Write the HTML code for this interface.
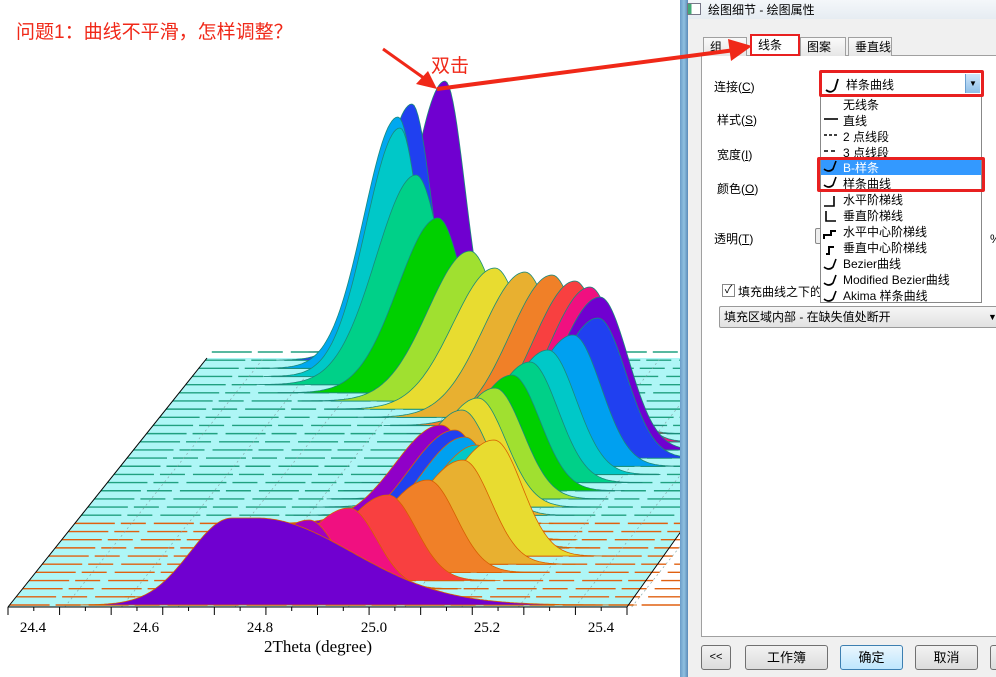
<!DOCTYPE html>
<html><head><meta charset="utf-8">
<style>
*{margin:0;padding:0;box-sizing:border-box}
body{width:996px;height:677px;overflow:hidden;background:#fff;position:relative;font-family:"Liberation Sans","Noto Sans CJK SC",sans-serif;font-size:12px;color:#000}
.abs{position:absolute}
.red{color:#f02818}
#dlg{position:absolute;left:680px;top:0;width:316px;height:677px;background:#f0f0f0}
.lbl{position:absolute;font-size:12px}
.item{position:absolute;left:22px;height:16px;line-height:16px;font-size:12px;white-space:nowrap}
.btn{position:absolute;top:645px;height:25px;border:1px solid #707070;border-radius:3px;background:linear-gradient(#f2f2f2,#dcdcdc);text-align:center;line-height:23px;font-size:13px}
.tab{position:absolute;top:37px;height:19px;border:1px solid #a0a0a0;border-bottom:none;background:linear-gradient(#fafafa,#e6e6e6);font-size:12px;line-height:18px;padding-left:6px}
</style></head><body>
<svg id="chart" class="abs" style="left:0;top:0" width="680" height="677">
<defs><clipPath id="cp"><rect x="0" y="0" width="680" height="677"/></clipPath></defs>
<g clip-path="url(#cp)" id="cg">
<polygon points="8,607 627,607 682,530 682,358 207,358" fill="#aef6f6"/>
<g id="stripes"></g>
<g id="grid" stroke="#8aa" stroke-width="0.7" stroke-dasharray="2,3"></g>
<g id="curves"></g>
<line x1="207" y1="358" x2="8" y2="607" stroke="#000" stroke-width="1"/>
<line x1="627" y1="607" x2="682" y2="530" stroke="#000" stroke-width="1"/>
</g>
<line x1="8" y1="607" x2="627" y2="607" stroke="#000" stroke-width="1"/>
<g id="ticks" stroke="#000" stroke-width="1"></g>
<g font-family="Liberation Serif, serif" font-size="15" text-anchor="middle">
<text x="33" y="632">24.4</text><text x="146" y="632">24.6</text><text x="260" y="632">24.8</text><text x="374" y="632">25.0</text><text x="487" y="632">25.2</text><text x="601" y="632">25.4</text>
<text x="318" y="652" font-size="17">2Theta (degree)</text>
</g>
</svg>
<div class="abs red" style="left:16px;top:17px;font-size:19px">问题1：曲线不平滑，怎样调整？</div>
<div class="abs red" style="left:431px;top:51px;font-size:19px">双击</div>

<div id="dlg">
<div class="abs" style="left:0;top:0;width:8px;height:677px;background:linear-gradient(90deg,#6a9cc8,#8fc0e0,#5a8ab8)"></div>
<div class="abs" style="left:8px;top:0;width:308px;height:19px;background:linear-gradient(#f4f7fa,#e6ecf2)"></div>
<div class="abs" style="left:7px;top:3px;width:14px;height:12px;border:1px solid #778;background:linear-gradient(90deg,#4a7 30%,#fff 30%)"></div>
<div class="lbl" style="left:28px;top:1px;font-size:12px">绘图细节 - 绘图属性</div>
<div class="abs" style="left:21px;top:55px;width:300px;height:582px;background:#fff;border:1px solid #a0a0a0"></div>
<div class="tab" style="left:23px;width:44px">组</div>
<div class="tab" style="left:120px;width:46px">图案</div>
<div class="tab" style="left:168px;width:44px">垂直线</div>
<div class="tab" style="left:70px;top:34px;height:22px;width:50px;background:#fff;border:2px solid #e82020">线条</div>
<div class="lbl" style="left:34px;top:78px">连接(<u>C</u>)</div>
<div class="lbl" style="left:37px;top:111px">样式(<u>S</u>)</div>
<div class="lbl" style="left:37px;top:146px">宽度(<u>I</u>)</div>
<div class="lbl" style="left:37px;top:180px">颜色(<u>O</u>)</div>
<div class="lbl" style="left:34px;top:230px">透明(<u>T</u>)</div>
<div class="abs" style="left:135px;top:228px;width:8px;height:16px;border:1px solid #888;background:#eee;border-radius:2px"></div>
<div class="lbl" style="left:310px;top:232px">%</div>
<div class="abs" style="left:42px;top:284px;width:13px;height:13px;border:1px solid #888;background:#fff;font-size:11px;line-height:11px;text-align:center">✓</div>
<div class="lbl" style="left:58px;top:283px">填充曲线之下的</div>
<div class="abs" style="left:39px;top:306px;width:280px;height:22px;border:1px solid #999;border-radius:2px;background:linear-gradient(#f6f6f6,#e2e2e2);padding-left:4px;line-height:20px;font-size:12px">填充区域内部 - 在缺失值处断开<span style="position:absolute;left:268px;font-size:9px">▼</span></div>

<div class="abs" style="left:140px;top:96px;width:162px;height:207px;background:#fff;border:1px solid #888">
<div class="abs" style="left:0;top:62px;width:160px;height:16px;background:#3399ff"></div>
<svg class="abs" style="left:0;top:0" width="22" height="207" stroke="#000" stroke-width="1.6" fill="none">
<line x1="3" y1="22" x2="17" y2="22"/>
<line x1="3" y1="38" x2="17" y2="38" stroke-dasharray="3,2"/>
<line x1="3" y1="54" x2="17" y2="54" stroke-dasharray="4,3"/>
<path d="M3 72 Q8 76 12 72 L15 64" stroke="#000"/>
<path d="M3 88 Q8 92 12 88 L15 80"/>
<path d="M3 109 L13 109 L13 99"/>
<path d="M5 114 L5 124 L15 124"/>
<path d="M3 142 L3 138 L10 138 L10 134 L15 134" stroke-width="2"/>
<path d="M5 157 L8 157 L8 150 L13 150" stroke-width="2"/>
<path d="M3 170 Q8 174 12 170 L15 162"/>
<path d="M3 186 Q8 190 12 186 L15 178"/>
<path d="M3 202 Q8 206 12 202 L15 194"/>
</svg>
<div class="item" style="top:0">无线条</div>
<div class="item" style="top:16px">直线</div>
<div class="item" style="top:32px">2 点线段</div>
<div class="item" style="top:48px">3 点线段</div>
<div class="item" style="top:63px;color:#fff">B-样条</div>
<div class="item" style="top:79px">样条曲线</div>
<div class="item" style="top:95px">水平阶梯线</div>
<div class="item" style="top:111px">垂直阶梯线</div>
<div class="item" style="top:127px">水平中心阶梯线</div>
<div class="item" style="top:143px">垂直中心阶梯线</div>
<div class="item" style="top:159px">Bezier曲线</div>
<div class="item" style="top:175px">Modified Bezier曲线</div>
<div class="item" style="top:191px">Akima 样条曲线</div>
</div>
<div class="abs" style="left:137px;top:157px;width:168px;height:35px;border:3px solid #e82020;border-radius:2px"></div>
<div class="abs" style="left:139px;top:70px;width:165px;height:27px;border:3px solid #e82020;border-radius:2px;background:#fff">
<svg class="abs" style="left:2px;top:2px" width="18" height="18" fill="none" stroke="#000" stroke-width="1.8"><path d="M2 15 Q7 19 11 14 L14 4"/></svg>
<div class="abs" style="left:24px;top:3px;font-size:12px">样条曲线</div>
<div class="abs" style="left:143px;top:1px;width:15px;height:19px;background:linear-gradient(#cfe6fa,#8ebfe8);border-left:1px solid #6a9fd0;font-size:8px;text-align:center;line-height:19px">▼</div>
</div>

<div class="btn" style="left:21px;width:30px;font-size:11px">&lt;&lt;</div>
<div class="btn" style="left:65px;width:83px">工作簿</div>
<div class="btn" style="left:160px;width:63px;border-color:#3c7fb1;background:linear-gradient(#eaf6fd,#bee6fd)">确定</div>
<div class="btn" style="left:235px;width:63px">取消</div>
<div class="btn" style="left:310px;width:20px"></div>
</div>

<svg class="abs" style="left:0;top:0" width="996" height="677">
<line x1="383" y1="49" x2="428" y2="81" stroke="#f02818" stroke-width="3"/>
<polygon points="437,89 416,84 428,71" fill="#f02818"/>
<line x1="437" y1="89" x2="735" y2="50" stroke="#f02818" stroke-width="4"/>
<polygon points="752,46 728,39 731,61" fill="#f02818"/>
</svg>

<script>
var S=[
[445,81,'#7000d0'],[412,104,'#2040f0'],[398,117,'#00a8f0'],[400,128,'#00c8c8'],[416,175,'#00d088'],[438,218,'#00d000'],[470,251,'#a0e030'],[495,268,'#e8dc30'],[525,272,'#e8b030'],[552,275,'#f08028'],[575,281,'#f84040'],[590,287,'#f01080'],[600,297,'#7000d0'],[598,318,'#2040f0'],[573,335,'#00a0f0'],[548,350,'#00c8c8'],[530,362,'#00d088'],[512,375,'#00d000'],[495,388,'#a0e030'],[478,398,'#e8dc30'],[462,410,'#e8b030'],[441,425,'#9000c8'],[455,430,'#2040f0'],[465,437,'#00a0f0'],[477,445,'#00c8c8'],[494,440,'#e8dc30'],[463,460,'#e8b030'],[428,480,'#f08028'],[388,495,'#f84040'],[349,508,'#f01080'],[309,520,'#a000c0'],[232,518,'#7000d0']];
var ns='http://www.w3.org/2000/svg',cv=document.getElementById('curves'),st=document.getElementById('stripes'),gr=document.getElementById('grid'),tk=document.getElementById('ticks');
function el(t,a,p){var e=document.createElementNS(ns,t);for(var k in a)e.setAttribute(k,a[k]);p.appendChild(e);return e}
var N=S.length;
for(var i=0;i<N;i++){
 var y0=352+i*(253/(N-1));
 var xl=207-(y0-358)*199/249; if(xl<8)xl=8;
 el('line',{x1:xl,y1:y0,x2:700,y2:y0,stroke:i<21?'#20a080':'#e06010','stroke-width':1.4,'stroke-dasharray':'40,6,25,8'},st);
}
for(var j=0;j<12;j++){var xb=8+j*56.7;el('line',{x1:xb,y1:607,x2:xb+199,y2:358},gr);}
for(var i=0;i<N;i++){
 var c=S[i][0],py=S[i][1],col=S[i][2],y0=352+i*(253/(N-1)),h=y0-py;
 var sl,sr,flat=0;
 if(i<4){sl=34;sr=20}else if(i<6){sl=40;sr=26}else if(i<21){sl=42;sr=28}else if(i<N-1){sl=46;sr=28}else{sl=42;sr=95;flat=25}
 var d='M'+(c-4*sl)+' '+y0;
 for(var x=c-4*sl;x<=c+4*sr+flat;x+=2){
  var t;if(x<c)t=(x-c)/sl;else if(x<c+flat)t=0;else t=(x-c-flat)/sr;
  var y=y0-h*Math.exp(-t*t/2);
  d+=' L'+x+' '+y.toFixed(1);
 }
 d+=' L'+(c+4*sr+flat)+' '+y0+' Z';
 el('path',{d:d,fill:col,stroke:i<21?'#1a8a7a':'#d86000','stroke-width':0.8},cv);
}
for(var k=0;k<=24;k++){var x=8+k*(619/24);el('line',{x1:x,y1:607,x2:x,y2:k%2?611:615},tk);}
</script>
</body></html>
